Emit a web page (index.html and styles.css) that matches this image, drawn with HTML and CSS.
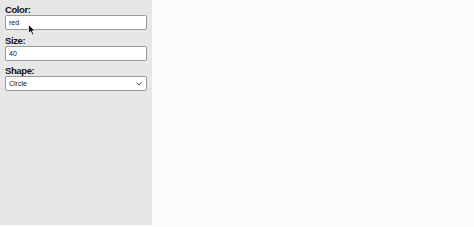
FILE: index.html
```html
<!DOCTYPE html>
<html lang="en">
<head>
    <meta charset="UTF-8">
    <title>Shape editor</title>
    <link rel="stylesheet" href="styles.css">
</head>
<body>
    <div class="app">
        <div class="sidebar">
            <div class="field">
                <label for="color">Color:</label>
                <input id="color" type="text" value="red">
                <svg class="cursor" width="8" height="12" viewBox="0 0 8 12">
                    <path d="M0.5 0.5 L0.5 9.5 L2.7 7.4 L4.3 11 L5.8 10.3 L4.3 6.9 L7.3 6.9 Z" fill="#111" stroke="#fff" stroke-width="0.8"/>
                </svg>
            </div>
            <div class="field">
                <label for="size">Size:</label>
                <input id="size" type="text" value="40">
            </div>
            <div class="field">
                <label for="shape">Shape:</label>
                <select id="shape">
                    <option>Circle</option>
                    <option>Square</option>
                    <option>Triangle</option>
                </select>
            </div>
        </div>
        <div class="canvas"></div>
    </div>
</body>
</html>
```

FILE: styles.css
```css
body {
    margin: 0;
    padding: 0;
    background-color: #fcfbfc;
    font-family: "Liberation Sans", Arial, sans-serif;
}
.app {
    display: flex;
    height: 227px;
}
.sidebar {
    width: 142px;
    height: 221px;
    padding: 4px 5px 0 5px;
    background-color: #e8e7e8;
    display: flex;
    flex-direction: column;
    gap: 4.5px;
}
.canvas {
    flex: 1;
}
.field {
    position: relative;
    display: flex;
    flex-direction: column;
}
.field label {
    font-size: 9.5px;
    font-weight: bold;
    letter-spacing: -0.4px;
    color: #111;
    height: 11px;
    line-height: 12px;
}
.field input,
.field select {
    box-sizing: border-box;
    width: 142px;
    height: 15px;
    margin: 0;
    padding: 0 3px;
    border: 1px solid #9a9a9a;
    border-radius: 2px;
    background-color: #fff;
    font-family: "Liberation Sans", Arial, sans-serif;
    font-size: 7px;
    color: #111;
}
.field select {
    appearance: none;
    background-image: url("data:image/svg+xml,%3Csvg xmlns='http://www.w3.org/2000/svg' width='6' height='4'%3E%3Cpath d='M0.5 0.5 L3 3 L5.5 0.5' fill='none' stroke='%23555' stroke-width='1'/%3E%3C/svg%3E");
    background-repeat: no-repeat;
    background-position: right 4px center;
}
.cursor {
    position: absolute;
    left: 23px;
    top: 20px;
}
```
